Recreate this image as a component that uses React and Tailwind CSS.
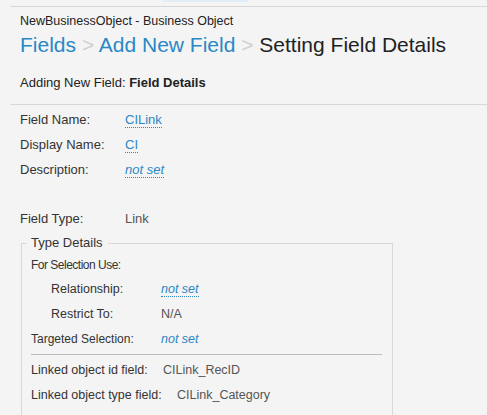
import React from "react";

function Link({ children, italic }) {
  return (
    <span
      className={
        "text-[#2a88c5] border-b border-dotted border-[#2a88c5] " +
        (italic ? "italic" : "")
      }
    >
      {children}
    </span>
  );
}

export default function App() {
  return (
    <div
      className="w-[487px] h-[415px] overflow-hidden bg-[#f4f4f4] text-[#333]"
      style={{ fontFamily: '"Liberation Sans", Arial, sans-serif' }}
    >
      <div className="ml-[163px] w-[85px] h-[2px] bg-[#e2edf8]" />
      <div className="mt-[4px] ml-[10px] h-px bg-[#d8d8d8]" />

      <div className="px-[20px]">
        <div className="mt-[5px] h-[18px] leading-[18px] text-[12.5px] text-[#222]">
          NewBusinessObject - Business Object
        </div>
        <div className="mt-[1px] h-[28px] leading-[28px] text-[21px] whitespace-nowrap">
          <span className="text-[#2a88c5]">Fields</span>{" "}
          <span className="text-[#cfcfcf]">&gt;</span>{" "}
          <span className="text-[#2a88c5]">Add New Field</span>{" "}
          <span className="text-[#cfcfcf]">&gt;</span>{" "}
          <span className="text-[#222]">Setting Field Details</span>
        </div>
        <div className="mt-[15px] h-[18px] leading-[18px] text-[13px] text-[#222]">
          Adding New Field: <span className="font-bold">Field Details</span>
        </div>
      </div>

      <div className="mt-[12px] ml-[10px] h-px bg-[#d8d8d8]" />

      <div className="mt-[2px] px-[20px] text-[13px]">
        <div className="flex h-[25px] leading-[25px]">
          <div className="w-[105px]">Field Name:</div>
          <div>
            <Link>CILink</Link>
          </div>
        </div>
        <div className="flex h-[25px] leading-[25px]">
          <div className="w-[105px]">Display Name:</div>
          <div>
            <Link>CI</Link>
          </div>
        </div>
        <div className="flex h-[25px] leading-[25px]">
          <div className="w-[105px]">Description:</div>
          <div>
            <Link italic>not set</Link>
          </div>
        </div>
        <div className="mt-[24px] flex h-[25px] leading-[25px]">
          <div className="w-[105px]">Field Type:</div>
          <div className="text-[#555]">Link</div>
        </div>
      </div>

      <fieldset className="mt-[4px] ml-[21px] w-[372px] h-[200px] border border-[#d8d8d8] pl-[4px] pr-[10px]">
        <legend className="px-[5px] text-[13px] leading-[16px] text-[#333]">
          Type Details
        </legend>
        <div className="pl-[5px] mt-[2px] text-[12px]">
          <div className="h-[24px] leading-[24px] text-[12px] tracking-[-0.5px]">
            For Selection Use:
          </div>
          <div className="flex h-[25px] leading-[25px] pl-[20px] text-[12.5px]">
            <div className="w-[110px]">Relationship:</div>
            <div>
              <Link italic>not set</Link>
            </div>
          </div>
          <div className="flex h-[25px] leading-[25px] pl-[20px] text-[12.5px]">
            <div className="w-[110px]">Restrict To:</div>
            <div className="text-[#555]">N/A</div>
          </div>
          <div className="flex h-[25px] leading-[25px] text-[12.5px]">
            <div className="w-[130px] text-[12px]">Targeted Selection:</div>
            <div className="italic text-[#2a88c5]">not set</div>
          </div>
          <div className="mt-[2px] h-px bg-[#bdbdbd]" />
          <div className="mt-[3px] flex h-[25px] leading-[25px] text-[12.5px]">
            <div className="w-[132px]">Linked object id field:</div>
            <div className="text-[#555]">CILink_RecID</div>
          </div>
          <div className="flex h-[25px] leading-[25px] text-[12.5px]">
            <div className="w-[146px]">Linked object type field:</div>
            <div className="text-[#555]">CILink_Category</div>
          </div>
        </div>
      </fieldset>
    </div>
  );
}
